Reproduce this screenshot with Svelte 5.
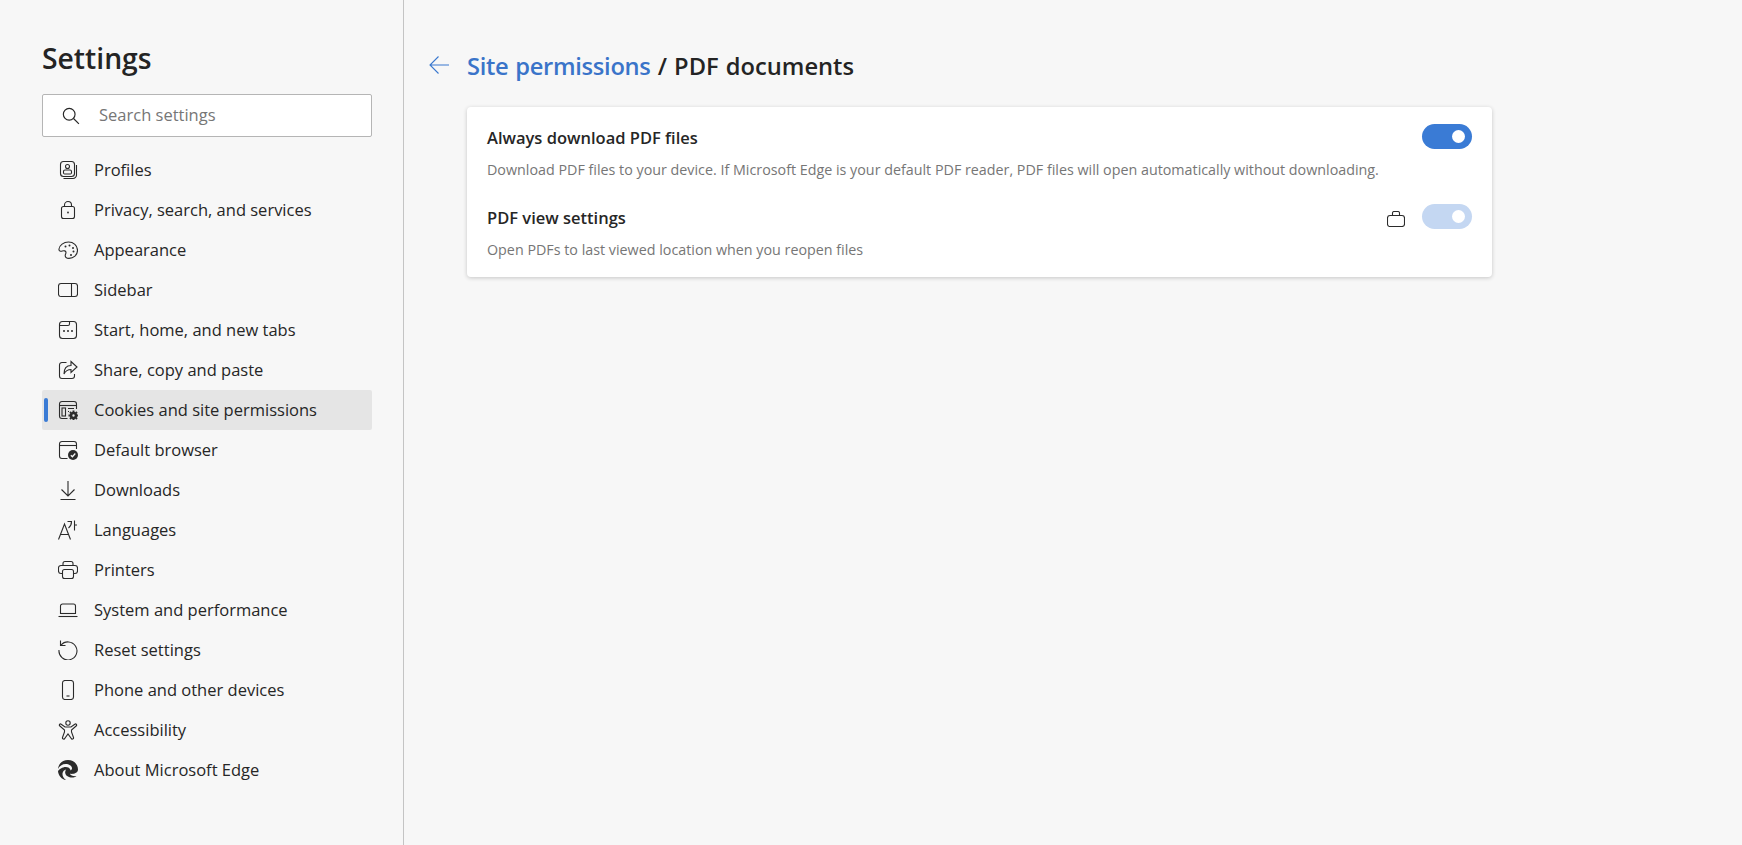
<script lang="ts">
  interface NavItem {
    readonly label: string;
    readonly icon: string;
    readonly active?: boolean;
  }

  const navItems: NavItem[] = [
    {
      label: "Profiles",
      icon: `<rect x="2.5" y="1.5" width="14" height="15" rx="3"/><circle cx="9.5" cy="6.5" r="2"/><path d="M5.5 13v-1.5A1.5 1.5 0 0 1 7 10h5a1.5 1.5 0 0 1 1.5 1.5V13a1.2 1.2 0 0 1-1.2 1H6.7a1.2 1.2 0 0 1-1.2-1z"/><path d="M18.5 5v10a3.5 3.5 0 0 1-3.5 3.5H5.5"/>`,
    },
    {
      label: "Privacy, search, and services",
      icon: `<rect x="3.5" y="6.5" width="13" height="12" rx="2"/><path d="M6.5 6.5V5a3.5 3.5 0 0 1 7 0v1.5"/><circle cx="10" cy="12.5" r=".9" fill="currentColor" stroke="none"/>`,
    },
    {
      label: "Appearance",
      icon: `<path d="M10.5 2C5.5 2 1.5 5.5 1 9c-.3 2 1.7 2.5 3.2 2 1.8-.6 3.8-.3 3.8 1.5 0 1.2-.8 1.7-.8 3 0 1.9 1.8 2.9 3.8 2.9 4.5 0 8.5-3.4 8.5-8.2S15.5 2 10.5 2z"/><g fill="currentColor" stroke="none"><circle cx="7.5" cy="6.5" r="1"/><circle cx="11.5" cy="5.5" r="1"/><circle cx="15" cy="8" r="1"/><circle cx="15.5" cy="11.5" r="1"/><circle cx="13" cy="15" r="1"/></g>`,
    },
    {
      label: "Sidebar",
      icon: `<rect x=".5" y="3.5" width="19" height="13" rx="2.5"/><path d="M13.5 3.5v13"/>`,
    },
    {
      label: "Start, home, and new tabs",
      icon: `<rect x="1.5" y="1.5" width="17" height="17" rx="3"/><path d="M1.5 5.5H10c.8 0 1.5-.7 1.5-1.5V1.5"/><g fill="currentColor" stroke="none"><circle cx="6" cy="11" r="1"/><circle cx="10" cy="11" r="1"/><circle cx="14" cy="11" r="1"/></g>`,
    },
    {
      label: "Share, copy and paste",
      icon: `<path d="M8.5 2.5H4A2.5 2.5 0 0 0 1.5 5v11A2.5 2.5 0 0 0 4 18.5h10a2.5 2.5 0 0 0 2.5-2.5v-2"/><path d="M13 1.5l6 5.5-6 5.5V9.5c-3.5 0-5.5 1.5-7 4.5 0-5 2.5-8.5 7-8.5z"/>`,
    },
    {
      label: "Cookies and site permissions",
      active: true,
      icon: `<path d="M9.5 18.5H4A2.5 2.5 0 0 1 1.5 16V4A2.5 2.5 0 0 1 4 1.5h12A2.5 2.5 0 0 1 18.5 4v5"/><path d="M1.5 5.5h17"/><rect x="4" y="8" width="3.5" height="8"/><path d="M10 8.5h6M10 11.5h1"/><circle cx="15.5" cy="15.5" r="2.5" fill="none" stroke-width="2.6"/><path stroke-width="1.9" d="M15.5 10.5v1.4M15.5 19.1v1.4M10.5 15.5h1.4M19.1 15.5h1.4M12 12l1 1M18 18l1 1M19 12l-1 1M13 18l-1 1"/>`,
    },
    {
      label: "Default browser",
      icon: `<path d="M9.5 18.5H4A2.5 2.5 0 0 1 1.5 16V4A2.5 2.5 0 0 1 4 1.5h12A2.5 2.5 0 0 1 18.5 4v5"/><path d="M1.5 5.5h17"/><circle cx="15" cy="15" r="5" fill="currentColor" stroke="none"/><path d="M12.8 15.2l1.6 1.5 2.9-3.2" stroke="#f7f7f7" stroke-width="1.3"/>`,
    },
    {
      label: "Downloads",
      icon: `<path d="M10 1v14.5M3.5 9.5l6.5 6.5 6.5-6.5M2.5 19.5h15"/>`,
    },
    {
      label: "Languages",
      icon: `<path d="M.5 19.5L6.5 4l6 15.5M2.5 14.5h8"/><path d="M9.5 1.5h4c0 3-1 5-3 6.5M16.5.5v10M16.5 5H19"/>`,
    },
    {
      label: "Printers",
      icon: `<path d="M4.5 13.5H3A2.5 2.5 0 0 1 .5 11V8A2.5 2.5 0 0 1 3 5.5h14A2.5 2.5 0 0 1 19.5 8v3a2.5 2.5 0 0 1-2.5 2.5h-1.5"/><path d="M5 5.5v-2a2 2 0 0 1 2-2h6a2 2 0 0 1 2 2v2"/><rect x="4.5" y="9.5" width="11" height="9" rx="2"/>`,
    },
    {
      label: "System and performance",
      icon: `<path d="M2.5 14V6a2 2 0 0 1 2-2h11a2 2 0 0 1 2 2v8"/><path d="M2.5 13.5h15"/><path d="M.5 16.5h19"/>`,
    },
    {
      label: "Reset settings",
      icon: `<path d="M3 5.2A9 9 0 1 1 1 10"/><path d="M2.5.5v5h5"/>`,
    },
    {
      label: "Phone and other devices",
      icon: `<rect x="4.5" y=".5" width="11" height="19" rx="2.5"/><path d="M8.5 16h3"/>`,
    },
    {
      label: "Accessibility",
      icon: `<circle cx="10" cy="3" r="2.2"/><path d="M3.2 4.2L7 7h6l3.8-2.8c1.3-.9 2.5.9 1.3 1.8l-4.6 4v2l2 5.500c.5 1.600-1.800 2.300-2.400.8L10 14l-3.100 4.300c-.6 1.500-2.900.8-2.400-.8l2-5.500v-2L1.900 6c-1.200-.9 0-2.700 1.300-1.800z"/>`,
    },
    {
      label: "About Microsoft Edge",
      icon: `<path fill="currentColor" stroke="none" d="M10 0C4.500 0 .4 3.800 0 9c1.300-3 4.300-5 7.800-5 3 0 6.200 1.600 6.200 4.300 0 1-.6 1.700-1.300 2.200-.5-2.400-2.700-3.500-5-3.500C4.500 7 1 9.500 0 11c.3 4.700 3.700 8.600 8 9-2.400-1.500-3.700-4-3.500-6.500.2-2.200 1.900-3.700 3.700-4-.8 1-1.200 2.300-1 3.500.5 2.800 3.500 4.500 6.800 4.500 1.500 0 3.200-.5 4.500-1.500-1 .2-2.200.2-3.300 0-2.400-.5-3.200-1.500-3-2.200 3.500.5 7.800-.7 7.800-4.300C20 4 15.500 0 10 0z"/>`,
    },
  ];
</script>

<div class="page">
  <aside class="sidebar">
    <h1>Settings</h1>

    <div class="search">
      <svg class="search-icon" viewBox="0 0 20 20" aria-hidden="true">
        <circle cx="8" cy="8" r="6.5" />
        <path d="M12.8 12.8l6 6" />
      </svg>
      <span class="search-text">Search settings</span>
    </div>

    <nav>
      {#each navItems as item}
        <div class="nav-item" class:active={item.active}>
          <svg class="nav-icon" viewBox="0 0 20 20" aria-hidden="true">
            {@html item.icon}
          </svg>
          <span class="nav-label">{item.label}</span>
        </div>
      {/each}
    </nav>
  </aside>

  <main>
    <header>
      <svg class="back" viewBox="0 0 20 18" aria-hidden="true">
        <path d="M9.5 .5L1 9l8.5 8.5M1 9h19" />
      </svg>
      <h2><span class="crumb">Site permissions</span> / PDF documents</h2>
    </header>

    <section class="card">
      <div class="row">
        <div class="row-head">
          <h3>Always download PDF files</h3>
          <div class="toggle"></div>
        </div>
        <p>Download PDF files to your device. If Microsoft Edge is your default PDF reader, PDF files will open automatically without downloading.</p>
      </div>

      <div class="row">
        <div class="row-head">
          <h3>PDF view settings</h3>
          <svg class="briefcase" viewBox="0 0 18 16" aria-hidden="true">
            <path d="M5.5 4.5V2A1.5 1.5 0 0 1 7 .5h4A1.5 1.5 0 0 1 12.5 2v2.5" />
            <rect x=".5" y="4.5" width="17" height="11" rx="2.5" />
          </svg>
          <div class="toggle disabled"></div>
        </div>
        <p>Open PDFs to last viewed location when you reopen files</p>
      </div>
    </section>
  </main>
</div>

<style>
  :global(body) {
    margin: 0;
    background: #f7f7f7;
    font-family: "Open Sans", "Noto Sans", sans-serif;
    color: #1f1f1f;
  }

  .page {
    display: flex;
    height: 845px;
    overflow: hidden;
  }

  .sidebar {
    box-sizing: border-box;
    width: 404px;
    flex: none;
    padding: 36px 31px 0 42px;
    border-right: 1px solid #c4c4c4;
  }

  h1 {
    margin: 0 0 13px;
    font-size: 28.3px;
    font-weight: 600;
    line-height: 45px;
    color: #242424;
  }

  .search {
    box-sizing: border-box;
    display: flex;
    align-items: center;
    height: 43px;
    padding-left: 19px;
    gap: 19px;
    background: #fff;
    border: 1px solid #b5b5b5;
    border-radius: 2px;
    font-size: 16.5px;
    color: #767676;
  }

  .search-text {
    margin-top: -2px;
  }

  .search-icon {
    width: 18px;
    height: 18px;
    fill: none;
    stroke: #262626;
    stroke-width: 1.3;
  }

  nav {
    margin-top: 13px;
  }

  .nav-item {
    display: flex;
    align-items: center;
    position: relative;
    height: 40px;
    padding-left: 16px;
    gap: 16px;
    border-radius: 2px;
    font-size: 16.5px;
    color: #262626;
  }

  .nav-label {
    margin-top: -2px;
  }

  .nav-item.active {
    background: #e5e5e5;
  }

  .nav-item.active::before {
    content: "";
    position: absolute;
    left: 2px;
    top: 8px;
    width: 4px;
    height: 24px;
    border-radius: 2px;
    background: #3a7bd5;
  }

  .nav-icon {
    width: 20px;
    height: 20px;
    flex: none;
    fill: none;
    stroke: currentColor;
    stroke-width: 1.1;
    color: #2b2b2b;
  }

  main {
    flex: 1;
    padding: 44px 0 0 25px;
  }

  header {
    display: flex;
    align-items: center;
    gap: 18px;
    height: 44px;
  }

  .back {
    width: 20px;
    height: 18px;
    fill: none;
    stroke: #3a78cf;
    stroke-width: 1.1;
    margin-top: -2px;
  }

  h2 {
    margin: 0;
    font-size: 23.7px;
    font-weight: 600;
    word-spacing: 1px;
    color: #242424;
  }

  .crumb {
    color: #3a74c9;
    letter-spacing: -0.3px;
  }

  .card {
    box-sizing: border-box;
    width: 1025px;
    height: 170px;
    margin: 19px 0 0 38px;
    padding: 16px 20px 0;
    background: #fff;
    border-radius: 4px;
    box-shadow: 0 1px 4px rgba(0, 0, 0, 0.2);
  }

  .row {
    height: 80px;
  }

  .row-head {
    display: flex;
    align-items: center;
    height: 28px;
    gap: 17px;
  }

  h3 {
    margin: 0 auto 0 0;
    font-size: 16.5px;
    font-weight: 600;
    color: #262626;
  }

  p {
    margin: 10px 0 0;
    font-size: 14.3px;
    line-height: 18px;
    color: #767676;
  }

  .toggle {
    position: relative;
    width: 50px;
    height: 25px;
    margin-top: -1px;
    border-radius: 13px;
    background: #3a7bd5;
  }

  .toggle::after {
    content: "";
    position: absolute;
    right: 7px;
    top: 6px;
    width: 13px;
    height: 13px;
    border-radius: 50%;
    background: #fff;
  }

  .toggle.disabled {
    background: #c4d7f2;
  }

  .briefcase {
    width: 18px;
    height: 16px;
    fill: none;
    stroke: #2b2b2b;
    stroke-width: 1.1;
    margin-top: 3px;
  }
</style>
